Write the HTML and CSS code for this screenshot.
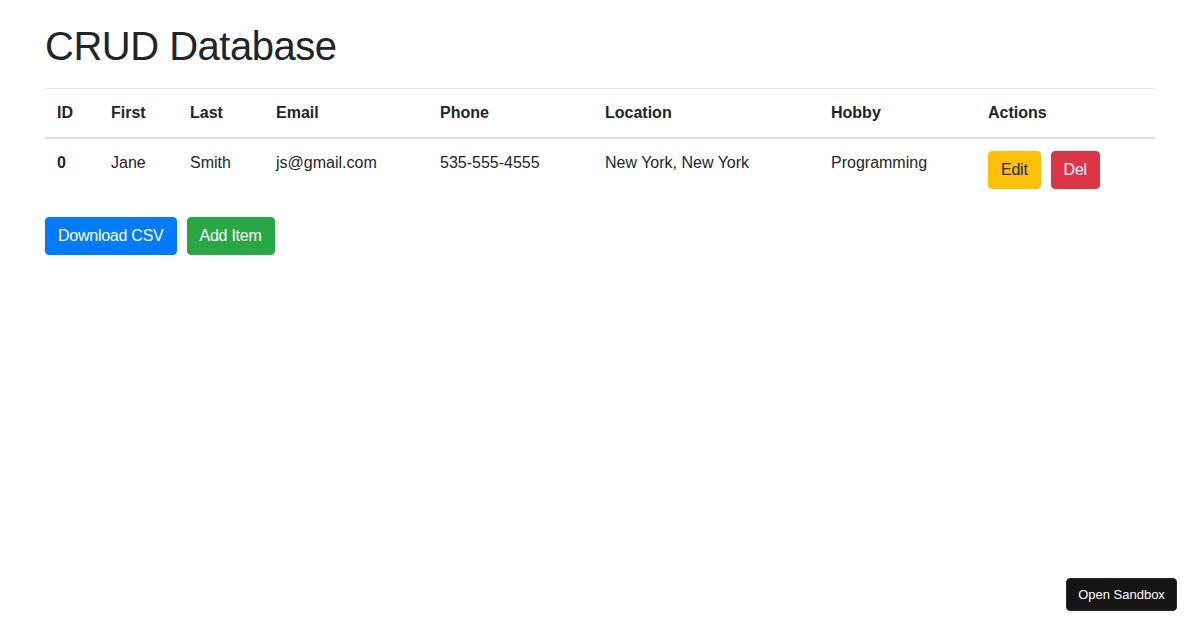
FILE: index.html
```html
<!DOCTYPE html>
<html lang="en">
<head>
<meta charset="utf-8">
<title>CRUD Database</title>
<link rel="stylesheet" href="styles.css">
</head>
<body>
<div class="container">
  <h1 class="title">CRUD Database</h1>
  <table class="table">
    <thead>
      <tr>
        <th class="c-id">ID</th>
        <th class="c-first">First</th>
        <th class="c-last">Last</th>
        <th class="c-email">Email</th>
        <th class="c-phone">Phone</th>
        <th class="c-loc">Location</th>
        <th class="c-hobby">Hobby</th>
        <th class="c-act">Actions</th>
      </tr>
    </thead>
    <tbody>
      <tr>
        <th class="row-id">0</th>
        <td>Jane</td>
        <td>Smith</td>
        <td>js@gmail.com</td>
        <td>535-555-4555</td>
        <td>New York, New York</td>
        <td>Programming</td>
        <td><div class="actions"><button class="btn btn-warning">Edit</button><button class="btn btn-danger">Del</button></div></td>
      </tr>
    </tbody>
  </table>
  <div class="toolbar">
    <button class="btn btn-primary">Download CSV</button>
    <button class="btn btn-success">Add Item</button>
  </div>
</div>
<button class="sandbox">Open Sandbox</button>
</body>
</html>
```
FILE: styles.css
```css
* { box-sizing: border-box; }
html, body { margin: 0; padding: 0; }
body {
  font-family: "Liberation Sans", Arial, Helvetica, sans-serif;
  font-size: 16px;
  line-height: 1.5;
  color: #212529;
  background: #fff;
}
.container {
  width: 1140px;
  margin: 0 auto;
  padding: 0 15px;
}
.title {
  font-size: 40px;
  font-weight: 500;
  line-height: 1.2;
  letter-spacing: -0.5px;
  margin: 22px 0 18px;
}
.table {
  width: 100%;
  border-collapse: collapse;
  margin-bottom: 16px;
}
.table th, .table td {
  padding: 12px;
  vertical-align: top;
  border-top: 1px solid #dee2e6;
  text-align: left;
}
.table th { font-weight: 700; }
.table thead th {
  vertical-align: bottom;
  border-bottom: 2px solid #dee2e6;
}
.c-id { width: 54px; }
.c-first { width: 79px; }
.c-last { width: 86px; }
.c-email { width: 164px; }
.c-phone { width: 165px; }
.c-loc { width: 226px; }
.c-hobby { width: 157px; }
.c-act { width: 179px; }
.actions { display: flex; gap: 10px; }
.toolbar { display: flex; gap: 10px; }
.btn {
  font-family: inherit;
  font-size: 16px;
  line-height: 1.5;
  letter-spacing: -0.25px;
  padding: 6px 12px;
  border: 1px solid transparent;
  border-radius: 4px;
  cursor: pointer;
}
.btn-primary { background: #007bff; border-color: #007bff; color: #fff; }
.btn-success { background: #28a745; border-color: #28a745; color: #fff; }
.btn-warning { background: #ffc107; border-color: #ffc107; color: #212529; }
.btn-danger { background: #dc3545; border-color: #dc3545; color: #fff; }
.sandbox {
  position: fixed;
  right: 23px;
  bottom: 19px;
  width: 111px;
  height: 33px;
  background: #151515;
  color: #fff;
  border: 1px solid #2a2a2a;
  border-radius: 4px;
  font-family: "Liberation Sans", Arial, sans-serif;
  font-size: 13px;
  padding: 0;
}
```
